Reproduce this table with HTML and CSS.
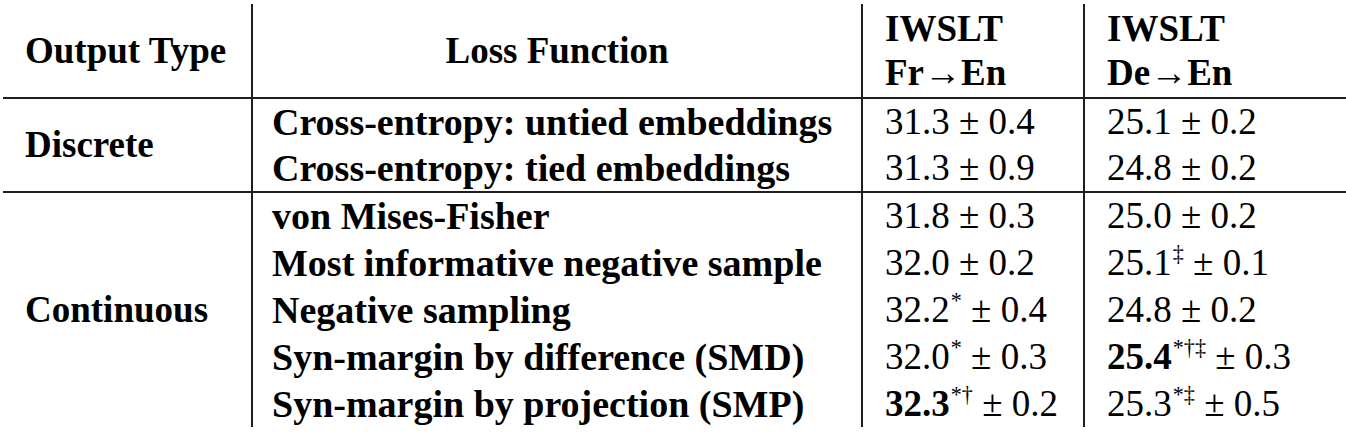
FILE: index.html
```html
<!DOCTYPE html>
<html lang="en">
<head>
    <meta charset="UTF-8">
    <meta name="viewport" content="width=device-width, initial-scale=1.0">
    <title>Loss Function Results</title>
    <link rel="stylesheet" href="styles.css">
</head>
<body>
    <table class="results">
        <colgroup>
            <col class="c-type">
            <col class="c-loss">
            <col class="c-fr">
            <col class="c-de">
        </colgroup>
        <thead>
            <tr class="head">
                <th class="type">Output Type</th>
                <th class="loss center">Loss Function</th>
                <th class="num">IWSLT<br>Fr&rarr;En</th>
                <th class="num">IWSLT<br>De&rarr;En</th>
            </tr>
        </thead>
        <tbody class="group">
            <tr>
                <th class="type" rowspan="2">Discrete</th>
                <td class="loss">Cross-entropy: untied embeddings</td>
                <td class="num">31.3 &plusmn; 0.4</td>
                <td class="num">25.1 &plusmn; 0.2</td>
            </tr>
            <tr>
                <td class="loss">Cross-entropy: tied embeddings</td>
                <td class="num">31.3 &plusmn; 0.9</td>
                <td class="num">24.8 &plusmn; 0.2</td>
            </tr>
        </tbody>
        <tbody class="group">
            <tr>
                <th class="type" rowspan="5">Continuous</th>
                <td class="loss">von Mises-Fisher</td>
                <td class="num">31.8 &plusmn; 0.3</td>
                <td class="num">25.0 &plusmn; 0.2</td>
            </tr>
            <tr>
                <td class="loss">Most informative negative sample</td>
                <td class="num">32.0 &plusmn; 0.2</td>
                <td class="num">25.1<sup>&Dagger;</sup> &plusmn; 0.1</td>
            </tr>
            <tr>
                <td class="loss">Negative sampling</td>
                <td class="num">32.2<sup>*</sup> &plusmn; 0.4</td>
                <td class="num">24.8 &plusmn; 0.2</td>
            </tr>
            <tr>
                <td class="loss">Syn-margin by difference (SMD)</td>
                <td class="num">32.0<sup>*</sup> &plusmn; 0.3</td>
                <td class="num"><b>25.4</b><sup>*&dagger;&Dagger;</sup> &plusmn; 0.3</td>
            </tr>
            <tr>
                <td class="loss">Syn-margin by projection (SMP)</td>
                <td class="num"><b>32.3</b><sup>*&dagger;</sup> &plusmn; 0.2</td>
                <td class="num">25.3<sup>*&Dagger;</sup> &plusmn; 0.5</td>
            </tr>
        </tbody>
    </table>
</body>
</html>
```

FILE: styles.css
```css
:root {
    --rule: #1e1e1e;
}

* {
    margin: 0;
    padding: 0;
    box-sizing: border-box;
}

body {
    background-color: white;
    color: black;
    font-family: "Liberation Serif", "Times New Roman", serif;
    font-size: 37px;
    padding: 4px 0 0 3px;
    overflow: hidden;
}

.results {
    border-collapse: collapse;
    table-layout: fixed;
    width: 1343px;
}

.c-type { width: 249px; }
.c-loss { width: 610px; }
.c-fr { width: 222px; }
.c-de { width: 262px; }

th, td {
    text-align: left;
    vertical-align: middle;
    white-space: nowrap;
    line-height: 46px;
    height: 47px;
}

th {
    font-weight: bold;
}

.head th {
    height: 94px;
    line-height: 44px;
}

.type {
    padding-left: 22px;
}

.loss {
    padding-left: 19px;
    font-weight: bold;
    border-left: 2px solid var(--rule);
}

td.loss {
    font-size: 38px;
}

.center {
    text-align: center;
    padding-left: 0;
}

.num {
    padding-left: 22px;
    border-left: 2px solid var(--rule);
}

td.num {
    font-weight: normal;
}

.group {
    border-top: 2px solid var(--rule);
}

sup {
    font-size: 0.6em;
    line-height: 0;
    vertical-align: 0.6em;
    margin-left: 1px;
}
```
